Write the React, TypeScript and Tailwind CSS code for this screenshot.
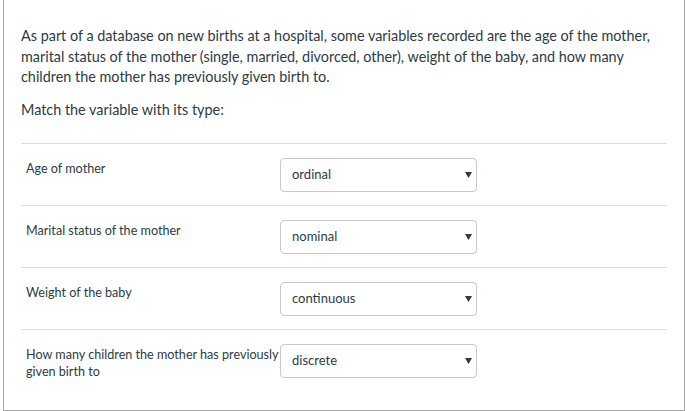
import { useState } from "react";

const rows = [
  { label: "Age of mother", value: "ordinal" },
  { label: "Marital status of the mother", value: "nominal" },
  { label: "Weight of the baby", value: "continuous" },
  { label: "How many children the mother has previously given birth to", value: "discrete" },
];

const options = ["[ Choose ]", "ordinal", "nominal", "continuous", "discrete"];

function AnswerSelect({ initial }: { initial: string }) {
  const [value, setValue] = useState(initial);
  return (
    <div className="relative w-[197px]">
      <select
        value={value}
        onChange={(e) => setValue(e.target.value)}
        className="h-[34px] w-full appearance-none rounded-[4px] border border-[#c9c9c9] bg-white pl-[11px] pr-6 text-[13px] text-[#2d3b45] outline-none"
      >
        {options.map((o) => (
          <option key={o} value={o}>
            {o}
          </option>
        ))}
      </select>
      <svg
        aria-hidden="true"
        viewBox="0 0 7 6"
        className="pointer-events-none absolute right-[5px] top-[14px] h-[6px] w-[7px]"
      >
        <path d="M0 0h7L3.5 6z" fill="#2d3b45" />
      </svg>
    </div>
  );
}

export default function App() {
  return (
    <main className="h-[411px] overflow-hidden bg-white pl-[3px] pr-[2px] font-['Lato','Liberation_Sans',sans-serif] text-[#2d3b45]">
      <div className="h-[411px] border-x border-b border-[#a8a8a8] px-[17px] pt-[26px]">
        <p className="text-[14.4px] leading-[20.5px]">
          As part of a database on new births at a hospital, some variables recorded are the age of the
          mother, marital status of the mother (single, married, divorced, other), weight of the baby, and
          how many children the mother has previously given birth to.
        </p>
        <p className="mt-[12px] text-[14.4px] leading-[20.5px]">Match the variable with its type:</p>

        <div className="mt-[23px]">
          {rows.map((r) => (
            <div key={r.label} className="flex border-t border-[#dcdcdc]">
              <div className="w-[259px] shrink-0 pl-[5px] pt-[16px] text-[12.6px] leading-[17px]">
                {r.label}
              </div>
              <div className="pb-[13px] pt-[14px]">
                <AnswerSelect initial={r.value} />
              </div>
            </div>
          ))}
        </div>
      </div>
    </main>
  );
}
